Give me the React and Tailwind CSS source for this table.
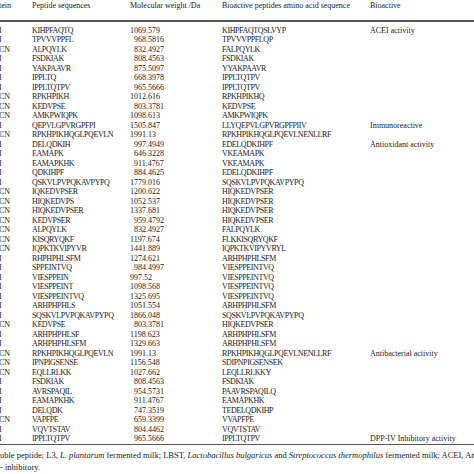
const rows = [
  ['I', 'KIHPFAQTQ', '1069.579', 'KIHPFAQTQSLVYP', 'ACEI activity'],
  ['I', 'TPVVVPPFL', '968.5816', 'TPVVVPPFLQP', ''],
  ['CN', 'ALPQYLK', '832.4927', 'FALPQYLK', ''],
  ['I', 'FSDKIAK', '808.4563', 'FSDKIAK', ''],
  ['I', 'YAKPAAVR', '875.5097', 'YYAKPAAVR', ''],
  ['I', 'IPPLTQ', '668.3978', 'IPPLTQTPV', ''],
  ['I', 'IPPLTQTPV', '965.5666', 'IPPLTQTPV', ''],
  ['CN', 'RPKHPIKH', '1012.616', 'RPKHPIKHQ', ''],
  ['CN', 'KEDVPSE', '803.3781', 'KEDVPSE', ''],
  ['CN', 'AMKPWIQPK', '1098.613', 'AMKPWIQPK', ''],
  ['I', 'QEPVLGPVRGPFPI', '1505.847', 'LLYQEPVLGPVRGPFPIIV', 'Immunoreactive'],
  ['CN', 'RPKHPIKHQGLPQEVLN', '1991.13', 'RPKHPIKHQGLPQEVLNENLLRF', ''],
  ['I', 'DELQDKIH', '997.4949', 'EDELQDKIHPF', 'Antioxidant activity'],
  ['I', 'EAMAPK', '646.3228', 'VKEAMAPK', ''],
  ['I', 'EAMAPKHK', '911.4767', 'VKEAMAPK', ''],
  ['I', 'QDKIHPF', '884.4625', 'EDELQDKIHPF', ''],
  ['I', 'QSKVLPVPQKAVPYPQ', '1779.016', 'SQSKVLPVPQKAVPYPQ', ''],
  ['CN', 'IQKEDVPSER', '1200.622', 'HIQKEDVPSER', ''],
  ['CN', 'HIQKEDVPS', '1052.537', 'HIQKEDVPSER', ''],
  ['CN', 'HIQKEDVPSER', '1337.681', 'HIQKEDVPSER', ''],
  ['CN', 'KEDVPSER', '959.4792', 'HIQKEDVPSER', ''],
  ['CN', 'ALPQYLK', '832.4927', 'FALPQYLK', ''],
  ['CN', 'KISQRYQKF', '1197.674', 'FLKKISQRYQKF', ''],
  ['CN', 'IQPKTKVIPYVR', '1441.889', 'IQPKTKVIPYVRYL', ''],
  ['I', 'RHPHPHLSFM', '1274.621', 'ARHPHPHLSFM', ''],
  ['I', 'SPPEINTVQ', '984.4997', 'VIESPPEINTVQ', ''],
  ['I', 'VIESPPEIN', '997.52', 'VIESPPEINTVQ', ''],
  ['I', 'VIESPPEINT', '1098.568', 'VIESPPEINTVQ', ''],
  ['I', 'VIESPPEINTVQ', '1325.695', 'VIESPPEINTVQ', ''],
  ['I', 'ARHPHPHLS', '1051.554', 'ARHPHPHLSFM', ''],
  ['I', 'SQSKVLPVPQKAVPYPQ', '1866.048', 'SQSKVLPVPQKAVPYPQ', ''],
  ['CN', 'KEDVPSE', '803.3781', 'HIQKEDVPSER', ''],
  ['I', 'ARHPHPHLSF', '1198.623', 'ARHPHPHLSFM', ''],
  ['I', 'ARHPHPHLSFM', '1329.663', 'ARHPHPHLSFM', ''],
  ['CN', 'RPKHPIKHQGLPQEVLN', '1991.13', 'RPKHPIKHQGLPQEVLNENLLRF', 'Antibacterial activity'],
  ['CN', 'IPNPIGSENSE', '1156.548', 'SDIPNPIGSENSEK', ''],
  ['CN', 'EQLLRLKK', '1027.662', 'LEQLLRLKKY', ''],
  ['I', 'FSDKIAK', '808.4563', 'FSDKIAK', ''],
  ['I', 'AVRSPAQIL', '954.5731', 'PAAVRSPAQILQ', ''],
  ['I', 'EAMAPKHK', '911.4767', 'EAMAPKHK', ''],
  ['I', 'DELQDK', '747.3519', 'TEDELQDKIHP', ''],
  ['CN', 'VAPFPE', '659.3399', 'VVAPFPE', ''],
  ['I', 'VQVTSTAV', '804.4462', 'VQVTSTAV', ''],
  ['I', 'IPPLTQTPV', '965.5666', 'IPPLTQTPV', 'DPP-IV Inhibitory activity'],
]

// three-digit weights with four decimals sit a little further right in the scan
const indent = w => (w.length === 8 && w.indexOf('.') === 3 ? 'pl-[4px]' : '')

function App() {
  return (
    <div
      className="w-[474px] h-[474px] overflow-hidden bg-white text-[#222] text-[8px] whitespace-nowrap"
      style={{ fontFamily: '"Liberation Serif", "DejaVu Serif", serif' }}
    >
      <div className="grid grid-cols-[32px_98px_92px_148px_1fr] h-[22px] leading-[12px] border-b-2 border-[#555]">
        <div className="-ml-[1px]">tein</div>
        <div>Peptide sequences</div>
        <div>Molecular weight /Da</div>
        <div>Bioactive peptides amino acid sequence</div>
        <div>Bioactive</div>
      </div>

      <div className="pt-[3.5px] border-b-[1.5px] border-[#555]">
        {rows.map((r, i) => (
          <div key={i} className="grid grid-cols-[32px_98px_92px_148px_1fr] h-[9.5px] leading-[9.5px]">
            <div className="-ml-[1px]">{r[0]}</div>
            <div className="tracking-[-0.4px]">{r[1]}</div>
            <div className={indent(r[2])}>{r[2]}</div>
            <div className="tracking-[-0.4px]">{r[3]}</div>
            <div>{r[4]}</div>
          </div>
        ))}
      </div>

      <div className="text-[8.5px] leading-[12px] pt-[4px]">
        <p>
          uble peptide; L3, <i>L. plantarum</i> fermented milk; LBST, <i>Lactobacillus bulgaricus</i> and{' '}
          <i>Streptococcus thermophilus</i> fermented milk; ACEI, Ang
        </p>
        <p>- inhibitory.</p>
      </div>
    </div>
  )
}

export default App
